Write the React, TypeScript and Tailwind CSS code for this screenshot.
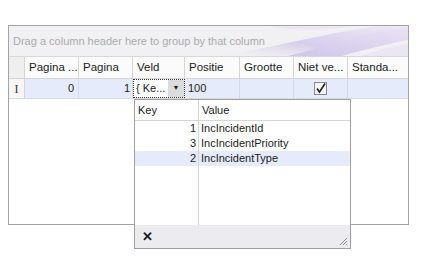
import React from "react";

const columns = [
  { title: "Pagina ...", width: "w-[54px]" },
  { title: "Pagina", width: "w-[54px]" },
  { title: "Veld", width: "w-[52px]" },
  { title: "Positie", width: "w-[55px]" },
  { title: "Grootte", width: "w-[54px]" },
  { title: "Niet ve...", width: "w-[54px]" },
  { title: "Standa...", width: "flex-1" },
];

const lookup = [
  { key: 1, value: "IncIncidentId", selected: false },
  { key: 3, value: "IncIncidentPriority", selected: false },
  { key: 2, value: "IncIncidentType", selected: true },
];

function Checkbox() {
  return (
    <svg width="13" height="13" viewBox="0 0 13 13">
      <rect x="0.5" y="0.5" width="12" height="12" fill="#f4f4f4" stroke="#8a8a8a" />
      <path d="M3 6.5 L5.5 10 L11 1.5" fill="none" stroke="#222" strokeWidth="1.6" />
    </svg>
  );
}

function SizeGrip() {
  return (
    <svg width="10" height="10" viewBox="0 0 10 10">
      <path d="M9 2 L2 9 M9 5 L5 9 M9 8 L8 9" stroke="#8c8c8c" strokeWidth="1" />
    </svg>
  );
}

export default function App() {
  return (
    <div
      className="relative h-[260px] w-[424px] bg-white text-[11px] text-[#1b1b1b]"
      style={{ fontFamily: '"Liberation Sans", Arial, sans-serif' }}
    >
      <div className="absolute left-[8px] top-[25px] h-[200px] w-[401px] border border-[#a3a3a3] bg-white">
        {/* group panel */}
        <div className="relative flex h-[31px] items-center overflow-hidden border-b border-[#d8d8d8] bg-[#f1f1f3] px-[4px] text-[#ababab]">
          <svg className="absolute right-0 top-0" width="200" height="31" viewBox="0 0 200 31">
            <defs>
              <linearGradient id="sw" x1="0" y1="1" x2="1" y2="0">
                <stop offset="0" stopColor="#f1f1f3" stopOpacity="0" />
                <stop offset="0.45" stopColor="#d6cdeb" />
                <stop offset="1" stopColor="#efeaf6" />
              </linearGradient>
              <linearGradient id="sw2" x1="0" y1="1" x2="1" y2="0">
                <stop offset="0" stopColor="#cfc3ea" />
                <stop offset="1" stopColor="#e9e3f4" />
              </linearGradient>
            </defs>
            <path d="M0 31 C60 24 110 8 170 0 L200 0 L200 6 C140 14 100 26 70 31 Z" fill="url(#sw)" />
            <path d="M75 31 C115 22 150 8 200 1 L200 14 C170 20 145 27 130 31 Z" fill="url(#sw2)" />
            <path d="M150 31 C170 24 185 20 200 18 L200 31 Z" fill="#ebe6f4" />
            <path d="M60 0 C90 6 120 4 150 0 Z" fill="#ece7f5" />
          </svg>
          <span className="relative">Drag a column header here to group by that column</span>
        </div>

        {/* header */}
        <div className="flex h-[22px] border-b border-[#d5d5d5] bg-[#fbfbfb]">
          <div className="w-[16px] border-r border-[#d5d5d5] bg-[#efefef]" />
          {columns.map((c) => (
            <div
              key={c.title}
              className={`${c.width} flex items-center overflow-hidden whitespace-nowrap border-r border-[#d5d5d5] px-[4px] text-[11.5px] last:border-r-0`}
            >
              {c.title}
            </div>
          ))}
        </div>

        {/* data row */}
        <div className="flex h-[20px] border-b border-[#d9d9d9] bg-[#e5ebfa]">
          <div
            className="flex w-[16px] items-center justify-center border-r border-[#d5d5d5] bg-[#f7f7f7] text-[12px] text-[#333]"
            style={{ fontFamily: '"Liberation Serif", serif' }}
          >
            I
          </div>
          <div className="flex w-[54px] items-center justify-end border-r border-[#d2d9e8] px-[4px]">0</div>
          <div className="flex w-[54px] items-center justify-end border-r border-[#d2d9e8] px-[2px]">1</div>
          <div className="flex w-[52px] items-stretch border border-dotted border-[#333] bg-white">
            <span className="flex flex-1 items-center pl-[2px]">{"{ Ke..."}</span>
            <span className="flex w-[16px] items-center justify-center bg-[#dcdcdc] text-[7px]">▼</span>
          </div>
          <div className="flex w-[55px] items-center border-r border-[#d2d9e8] px-[3px]">100</div>
          <div className="w-[54px] border-r border-[#d2d9e8]" />
          <div className="flex w-[54px] items-center justify-center border-r border-[#d2d9e8]">
            <Checkbox />
          </div>
          <div className="flex-1" />
        </div>
      </div>

      {/* lookup popup */}
      <div className="absolute left-[134px] top-[99px] flex h-[150px] w-[217px] flex-col border border-[#a0a0a0] bg-white">
        <div className="flex h-[21px] border-b border-[#d5d5d5]">
          <div className="flex w-[64px] items-center border-r border-[#d5d5d5] px-[3px]">Key</div>
          <div className="flex flex-1 items-center px-[3px]">Value</div>
        </div>
        <div className="flex flex-1 flex-col">
          {lookup.map((r) => (
            <div key={r.key} className={`flex h-[15px] ${r.selected ? "bg-[#e5ebfa]" : ""}`}>
              <div className="flex w-[64px] items-center justify-end border-r border-[#d5d5d5] pr-[2px]">{r.key}</div>
              <div className="flex flex-1 items-center px-[2px]">{r.value}</div>
            </div>
          ))}
          <div className="flex flex-1">
            <div className="w-[64px] border-r border-[#d5d5d5]" />
          </div>
        </div>
        <div className="flex h-[23px] items-center justify-between bg-[#ebebf0] pl-[7px] pr-[2px]">
          <span className="text-[13px] font-bold text-[#1a1a2a]">✕</span>
          <span className="self-end pb-[2px]">
            <SizeGrip />
          </span>
        </div>
      </div>
    </div>
  );
}
